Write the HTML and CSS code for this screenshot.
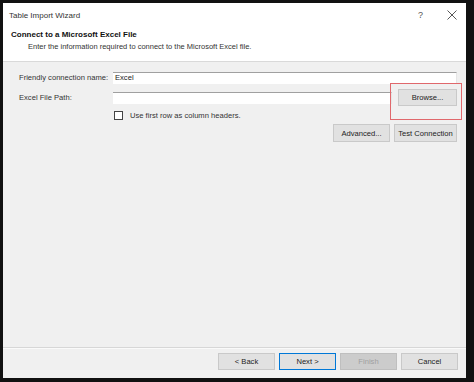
FILE: index.html
```html
<!DOCTYPE html>
<html>
<head>
<meta charset="utf-8">
<link rel="stylesheet" href="styles.css">
</head>
<body>
<div class="window">
  <div class="titlebar">
    <span class="title">Table Import Wizard</span>
    <span class="tb-icons">
      <span class="help">?</span>
      <svg class="close" width="10" height="10" viewBox="0 0 10 10"><path d="M0.5 0.5 L9.5 9.5 M9.5 0.5 L0.5 9.5" stroke="#444" stroke-width="0.9" fill="none"/></svg>
    </span>
  </div>
  <div class="header">
    <div class="h-title">Connect to a Microsoft Excel File</div>
    <div class="h-sub">Enter the information required to connect to the Microsoft Excel file.</div>
  </div>
  <div class="content">
    <div class="row">
      <label class="lbl">Friendly connection name:</label>
      <div class="input wide">Excel</div>
    </div>
    <div class="row path-row">
      <label class="lbl">Excel File Path:</label>
      <div class="input path"></div>
      <button class="btn browse">Browse...</button>
    </div>
    <div class="check-row">
      <span class="checkbox"></span>
      <span class="check-lbl">Use first row as column headers.</span>
    </div>
    <div class="adv-row">
      <button class="btn adv">Advanced...</button>
      <button class="btn test">Test Connection</button>
    </div>
    <div class="highlight"></div>
  </div>
  <div class="footer">
    <button class="btn nav">&lt; Back</button>
    <button class="btn nav next">Next &gt;</button>
    <button class="btn nav disabled">Finish</button>
    <button class="btn nav">Cancel</button>
  </div>
</div>
</body>
</html>
```
FILE: styles.css
```css
html, body {
  margin: 0;
  padding: 0;
  background: #111;
  width: 474px;
  height: 382px;
  overflow: hidden;
}
body {
  font-family: "Liberation Sans", Arial, sans-serif;
  font-size: 7.6px;
  color: #222;
}
.window {
  margin: 3px 8px 0 3px;
  height: 375px;
  background: #f0f0f0;
  display: flex;
  flex-direction: column;
}
.titlebar {
  height: 24px;
  background: #fff;
  display: flex;
  align-items: center;
  justify-content: space-between;
  padding: 0 6px 0 6px;
  font-size: 8px;
  color: #333;
}
.tb-icons {
  display: flex;
  align-items: center;
  gap: 24px;
  margin-right: 3px;
}
.help {
  font-size: 9px;
  color: #555;
}
.close { display: block; }
.header {
  height: 35px;
  background: #fff;
  border-bottom: 1px solid #d9d9d9;
  padding: 3px 0 0 8px;
  box-sizing: border-box;
}
.h-title {
  font-weight: bold;
  font-size: 8px;
  color: #111;
}
.h-sub {
  margin: 3px 0 0 17px;
  font-size: 7.5px;
  color: #333;
}
.content {
  flex: 1;
  position: relative;
  padding: 9px 9px 0 16px;
  border-bottom: 1px solid #d7d7d7;
}
.row {
  display: flex;
  align-items: center;
  height: 13px;
}
.lbl {
  width: 94px;
  color: #333;
}
.input {
  height: 12px;
  background: #fff;
  border-top: 1px solid #a0a0a0;
  border-right: 1px solid #e6e6e6;
  box-sizing: border-box;
  padding-left: 2px;
  line-height: 10px;
  color: #222;
}
.wide { flex: 1; }
.path-row { margin-top: 5px; height: 17px; }
.path { width: 279px; }
.btn {
  font-family: inherit;
  font-size: 7.6px;
  background: #e1e1e1;
  border: 1px solid #c9c9c9;
  color: #222;
  padding: 0;
  margin: 0;
  box-sizing: border-box;
}
.browse {
  margin-left: 6px;
  width: 59px;
  height: 17px;
}
.check-row {
  display: flex;
  align-items: center;
  margin: 5px 0 0 95px;
}
.checkbox {
  width: 9px;
  height: 9px;
  background: #fff;
  border: 1px solid #444;
  box-sizing: border-box;
}
.check-lbl {
  margin-left: 7px;
  color: #333;
}
.adv-row {
  display: flex;
  justify-content: flex-end;
  gap: 4px;
  margin-top: 4px;
}
.adv { width: 57px; height: 18px; }
.test { width: 63px; height: 18px; }
.highlight {
  position: absolute;
  left: 387px;
  top: 21px;
  width: 70px;
  height: 35px;
  border: 1px solid #e0686c;
}
.footer {
  height: 30px;
  border-top: 1px solid #fafafa;
  display: flex;
  justify-content: flex-end;
  align-items: flex-start;
  padding: 4px 8px 0 0;
  gap: 4px;
  box-sizing: border-box;
}
.nav { width: 57px; height: 17px; }
.next { border-color: #0078d7; }
.disabled { background: #cccccc; border-color: #bfbfbf; color: #a0a0a0; }
```
